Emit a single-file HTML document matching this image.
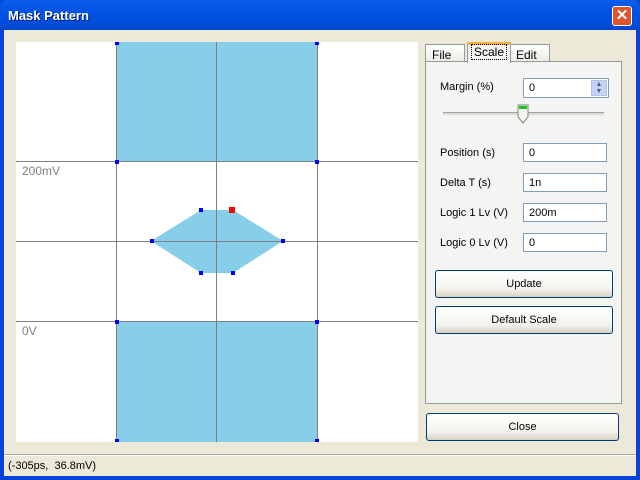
<!DOCTYPE html>
<html><head><style>
body{margin:0;width:640px;height:480px;overflow:hidden;font-family:"Liberation Sans",sans-serif;font-size:11px;}
.win{position:absolute;left:0;top:0;width:640px;height:480px;background:#0842d8;}
.title{position:absolute;left:0;top:0;width:640px;height:30px;background:linear-gradient(#0a5fe8,#0556e6 20%,#0050e0 70%,#0346c8);border-radius:7px 7px 0 0;}
.title span{position:absolute;left:8px;top:8px;color:#fff;font-weight:bold;font-size:13px;text-shadow:1px 1px #0a1a6a;}
.xbtn{position:absolute;left:612px;top:6px;width:20px;height:20px;background:#e0542c;border:1px solid #fff;border-radius:3px;box-sizing:border-box;color:#fff;font-weight:bold;font-size:15px;text-align:center;line-height:18px;}
.client{position:absolute;left:4px;top:30px;width:632px;height:446px;background:#ece9d8;}
.lbl{position:absolute;font-size:11px;color:#000;}
.inp{position:absolute;width:84px;height:19px;background:#fff;border:1px solid #7f9db9;box-sizing:border-box;padding:3px 5px 0;font-size:11px;}
.btn{position:absolute;border:1px solid #003c74;border-radius:3px;background:linear-gradient(#fff,#f3f2ec 70%,#d6d2c2);box-sizing:border-box;text-align:center;font-size:11px;}
</style></head><body>
<div class="win">
<div class="title"><span>Mask Pattern</span><div class="xbtn">✕</div></div>
<div class="client"></div>
<svg style="position:absolute;left:16px;top:42px" width="402" height="400">
<rect width="402" height="400" fill="#fff"/>
<rect x="101" y="0" width="200" height="120" fill="#87ceeb"/>
<rect x="101" y="280" width="200" height="120" fill="#87ceeb"/>
<polygon points="135,199 185,168 217,168 267,199 217,231 185,231" fill="#87ceeb"/>
<g stroke="#808080" stroke-width="1">
<line x1="100.5" y1="0" x2="100.5" y2="400"/><line x1="200.5" y1="0" x2="200.5" y2="400"/><line x1="301.5" y1="0" x2="301.5" y2="400"/>
<line x1="0" y1="119.5" x2="402" y2="119.5"/><line x1="0" y1="199.5" x2="402" y2="199.5"/><line x1="0" y1="279.5" x2="402" y2="279.5"/>
</g>
<g fill="#0000ff">
<rect x="99" y="0" width="4" height="3"/><rect x="299" y="0" width="4" height="3"/>
<rect x="99" y="118" width="4" height="4"/><rect x="299" y="118" width="4" height="4"/>
<rect x="99" y="278" width="4" height="4"/><rect x="299" y="278" width="4" height="4"/>
<rect x="99" y="397" width="4" height="3"/><rect x="299" y="397" width="4" height="3"/>
<rect x="183" y="166" width="4" height="4"/><rect x="134" y="197" width="4" height="4"/><rect x="265" y="197" width="4" height="4"/>
<rect x="183" y="229" width="4" height="4"/><rect x="215" y="229" width="4" height="4"/>
</g>
<rect x="213" y="165" width="6" height="6" fill="#f00"/>
<text x="6" y="133" font-size="12" fill="#808080" font-family="Liberation Sans">200mV</text>
<text x="6" y="293" font-size="12" fill="#808080" font-family="Liberation Sans">0V</text>
</svg>
<div style="position:absolute;left:425px;top:44px;width:40px;height:18px;background:linear-gradient(#fff,#ecebe5);border:1px solid #919b9c;border-bottom:none;box-sizing:border-box"><span class="lbl" style="left:6px;top:3px;font-size:12px">File</span></div>
<div style="position:absolute;left:510px;top:44px;width:40px;height:18px;background:linear-gradient(#fff,#ecebe5);border:1px solid #919b9c;border-bottom:none;box-sizing:border-box"><span class="lbl" style="left:5px;top:3px;font-size:12px">Edit</span></div>
<div style="position:absolute;left:425px;top:61px;width:197px;height:343px;background:#f4f4f2;border:1px solid #919b9c;box-sizing:border-box"></div>
<div style="position:absolute;left:467px;top:42px;width:44px;height:21px;background:#f4f4f2;border:1px solid #919b9c;border-top:3px solid #f7b03a;border-bottom:none;box-sizing:border-box"><span class="lbl" style="left:4px;top:0px;outline:1px dotted #000;padding:0 2px;font-size:12px">Scale</span></div>
<span class="lbl" style="left:440px;top:81px">Margin (%)</span>
<div class="inp" style="left:523px;top:78px;width:86px;height:20px">0</div>
<div style="position:absolute;left:591px;top:80px;width:16px;height:16px;background:#c2d3f7;border:1px solid #b0c4ef;box-sizing:border-box;font-size:7px;color:#4d6185;text-align:center;line-height:7px">▲<br>▼</div>
<div style="position:absolute;left:443px;top:112px;width:161px;height:2px;background:#dcdcd4;border-top:1px solid #a0a0a0"></div>
<svg style="position:absolute;left:517px;top:104px" width="12" height="20"><path d="M1 1h10v12l-5 6-5-6z" fill="#f4f4f2" stroke="#748c74"/><rect x="2" y="2" width="8" height="3" fill="#21c121"/></svg>
<span class="lbl" style="left:440px;top:147px">Position (s)</span><div class="inp" style="left:523px;top:143px">0</div>
<span class="lbl" style="left:440px;top:177px">Delta T (s)</span><div class="inp" style="left:523px;top:173px">1n</div>
<span class="lbl" style="left:440px;top:207px">Logic 1 Lv (V)</span><div class="inp" style="left:523px;top:203px">200m</div>
<span class="lbl" style="left:440px;top:237px">Logic 0 Lv (V)</span><div class="inp" style="left:523px;top:233px">0</div>
<div class="btn" style="left:435px;top:270px;width:178px;height:28px;line-height:26px">Update</div>
<div class="btn" style="left:435px;top:306px;width:178px;height:28px;line-height:26px">Default Scale</div>
<div class="btn" style="left:426px;top:413px;width:193px;height:28px;line-height:26px">Close</div>
<div style="position:absolute;left:4px;top:454px;width:632px;height:1px;background:#aca899"></div>
<div style="position:absolute;left:4px;top:455px;width:632px;height:1px;background:#fff"></div>
<span class="lbl" style="left:8px;top:460px">(-305ps,&nbsp; 36.8mV)</span>
</div>
</body></html>
